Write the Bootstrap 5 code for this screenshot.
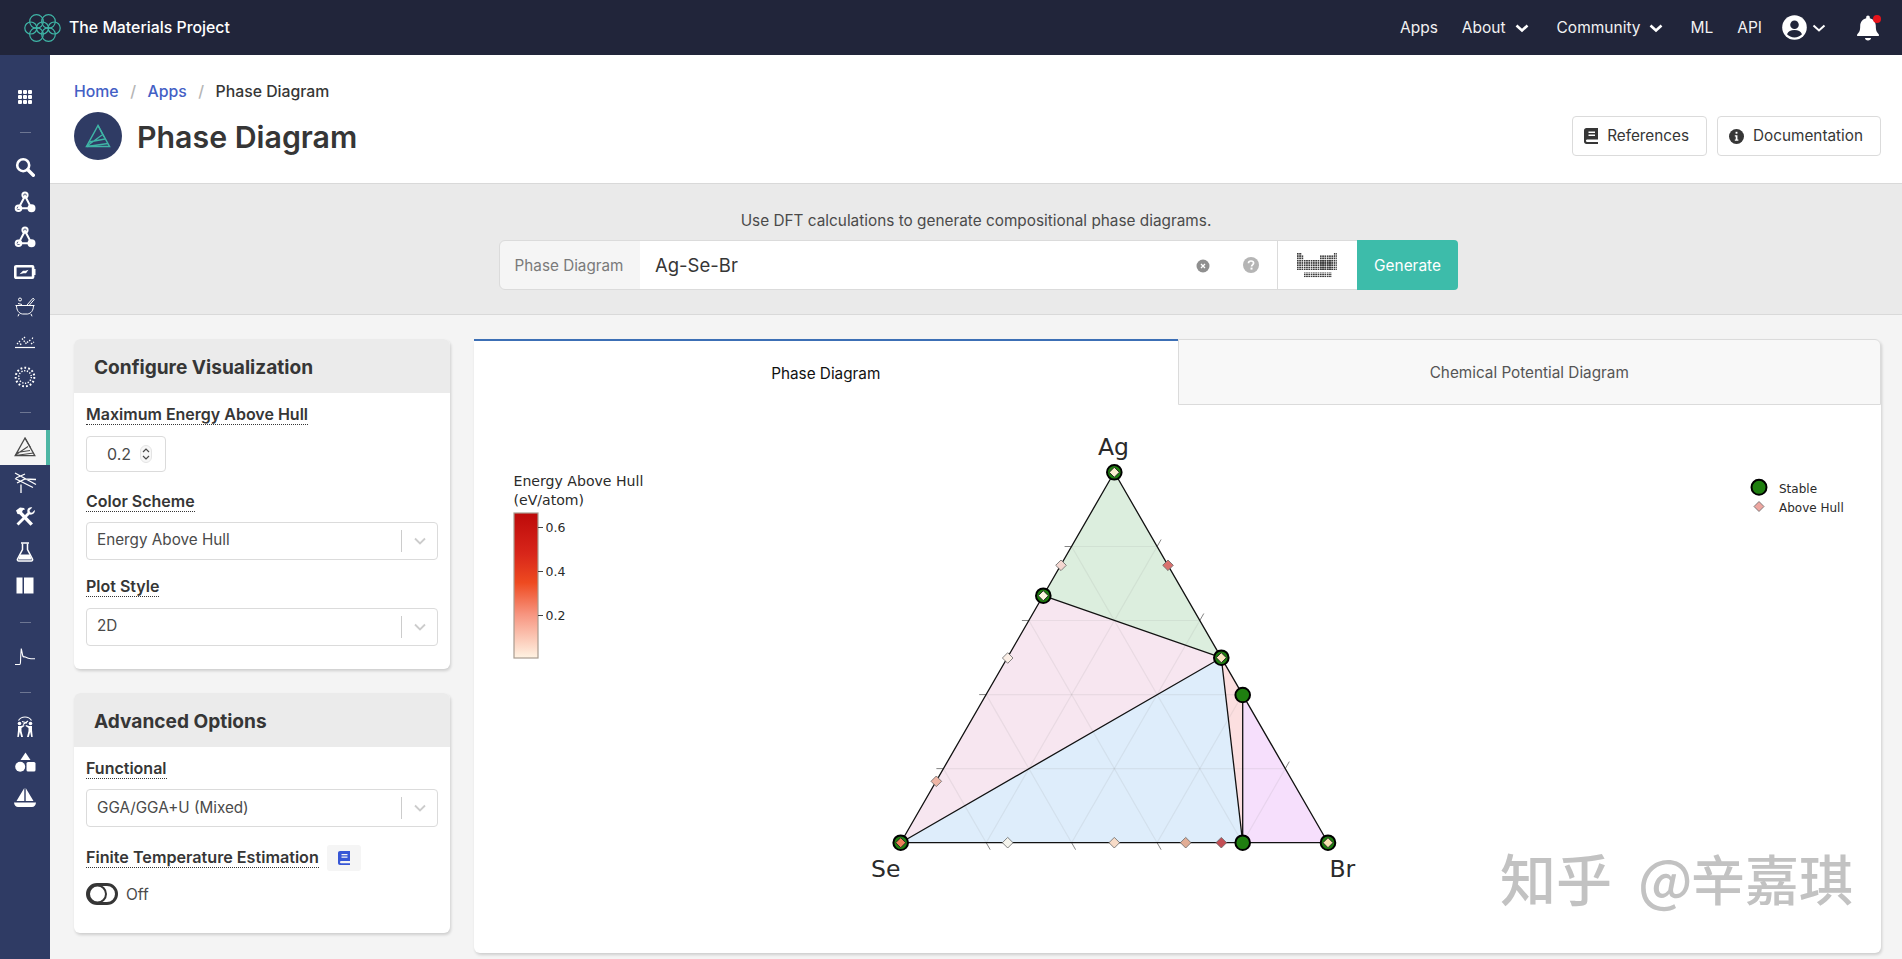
<!DOCTYPE html>
<html lang="en">
<head>
<meta charset="utf-8">
<title>Phase Diagram</title>
<link href="https://cdn.jsdelivr.net/npm/bootstrap@5.3.0/dist/css/bootstrap.min.css" rel="stylesheet">
<style>
html,body{height:959px;overflow:hidden}
body{font-family:Inter,"Liberation Sans",sans-serif;color:#363636;background:#f4f4f4;font-size:15.5px}
.mp-nav{height:55px;background:#21253a;color:#fff;padding:0 20px 0 24px;flex-wrap:nowrap}
.mp-brand{font-weight:500;font-size:15.85px;color:#fff;gap:8px}
.mp-links{gap:0;font-size:15.5px}
.mp-links .nav-link{color:#f2f2f2;padding:0;display:flex;align-items:center}
.mp-shell{height:904px}
.mp-side{width:50px;flex:none;background:#2f3b64;padding-top:24.5px;color:#fff}
.mp-sideitem{height:35px;display:flex;align-items:center;justify-content:center}
.mp-sideitem.is-active{background:#f5f5f5;border-right:4px solid #4db6a4;padding-left:4px;color:#444}
.mp-dash{width:11px;height:1px;background:rgba(255,255,255,.3)}
.mp-main{min-width:0}
.mp-head{background:#fff;border-bottom:1px solid #d9d9d9;height:129px;padding:25px 21px 0 24px}
.mp-head .breadcrumb{margin:0;font-size:15.8px;line-height:24px;--bs-breadcrumb-item-padding-x:11.5px;--bs-breadcrumb-divider-color:#b5b5b5;--bs-breadcrumb-item-active-color:#363636;font-weight:500}
.mp-head .breadcrumb a{color:#4460c5;text-decoration:none}
.mp-title{font-size:30.3px;font-weight:600;margin:0;line-height:48px;color:#363636;padding-top:2px}
.mp-round{width:48px;height:48px;border-radius:50%;background:#2f3b64;flex:none}
.mp-outbtn{height:40px;background:#fff;border:1px solid #dbdbdb;color:#363636;font-size:15.3px;padding:0 17px 0 11px;display:flex;align-items:center;gap:9px;border-radius:4px}
.mp-hero{height:131px;background:#eaeaea;border-bottom:1px solid #d9d9d9;padding-top:25px;text-align:center}
.mp-hero p{margin:0 0 7px;line-height:24px;font-size:15.35px;color:#4a4a4a}
.mp-search{width:959px;height:50px;margin:0 0 0 449px;flex-wrap:nowrap}
.mp-search .input-group-text{background:#f5f5f5;color:#7a7a7a;border-color:#dbdbdb;font-size:15.25px;width:142px;justify-content:center;padding:2px 2px 0 0}
.mp-field{position:relative;flex:1;background:#fff;border:1px solid #dbdbdb;border-left:0;display:flex;align-items:center;padding:2px 0 0 15px;font-size:18.5px;color:#363636}
.mp-pt{width:81px;background:#fff;border:1px solid #dbdbdb;border-left:0;display:flex;align-items:center;justify-content:center}
.mp-gen{width:101px;background:#3dbcaa;color:#fff;border:0;font-size:15.4px;border-radius:0 4px 4px 0;padding-top:8px}
.mp-body{padding:24px 21px 0 24px;gap:24px}
.mp-left{width:376px;flex:none}
.mp-card{border:0;border-radius:6px;box-shadow:1px 2px 3px rgba(10,10,10,.16);margin-bottom:24px}
.mp-card .card-header{background:#ebebeb;border:0;height:54px;padding:3px 20px 0;display:flex;align-items:center;font-size:19.1px;font-weight:700;color:#363636;border-radius:6px 6px 0 0}
.mp-card .card-body{padding:10px 12px 0 12px}
.mp-lbl{display:inline-block;font-weight:600;font-size:16px;line-height:20px;border-bottom:1px dotted #363636;color:#363636;margin:0}
.mp-lbl-long{font-size:16.15px}
.mp-num{width:80px;height:36px;margin-top:10px;border:1px solid #dbdbdb;border-radius:4px;display:flex;align-items:center;padding-left:20px;gap:9px;font-size:16px;color:#4a4a4a}
.mp-sel{height:38px;margin-top:9px;margin-bottom:15.6px;border:1px solid #dbdbdb;border-radius:4px;padding:0 0 0 10px;display:flex;align-items:center;font-size:15.25px;color:#4a4a4a;background:#fff}
.mp-sel span{flex:1}
.mp-sel i{width:1px;height:22px;background:#ccc;margin-right:11px}
.mp-sel svg{margin-right:10px}
.mp-sel-wide{margin-bottom:17.4px}
.mp-spacer{height:17.4px}
.mp-bookbtn{width:34px;height:26px;background:#f5f5f5;border-radius:3px;display:flex;align-items:center;justify-content:center}
.mp-off{font-size:15.5px;color:#4a4a4a}
.mp-bump{margin-bottom:4px}
.mp-panel{flex:1;min-width:0;height:614px;background:#fff;border-radius:6px;box-shadow:1px 2px 3px rgba(10,10,10,.16)}
.mp-tabs{border:0;flex-wrap:nowrap;height:66px}
.mp-tabs .nav-link{border-radius:0;height:66px;width:100%;display:flex;align-items:center;justify-content:center;font-size:15.3px;border:0}
.mp-tabs .nav-item:first-child .nav-link{color:#111;background:#fff;border-top:2px solid #3c6fb5;padding-top:11px}
.mp-tabs .nav-item:last-child .nav-link{color:#555;background:#f8f8f8;border:1px solid #dbdbdb;border-radius:0 6px 0 0;padding-bottom:6px}
.mp-plot{display:block;width:1407px;height:548px}
.mp-plot text{font-family:"DejaVu Sans","Liberation Sans",sans-serif;fill:#2a2a2a}
.mp-plot .wm{font-family:"Noto Sans CJK SC",sans-serif;fill:#c2c2c2;font-weight:500}
</style>
</head>
<body>
<nav class="navbar mp-nav">
  <a class="navbar-brand d-flex align-items-center p-0 m-0 mp-brand" href="#">
    <svg width="37" height="28" viewBox="0 0 37 28" fill="none" stroke="#3fb5a6" stroke-width="1.200"><circle cx="12.500" cy="7.500" r="6.800"/><circle cx="24.500" cy="7.500" r="6.800"/><circle cx="6.800" cy="14" r="6"/><circle cx="18.500" cy="14" r="6"/><circle cx="30.200" cy="14" r="6"/><circle cx="12.500" cy="20.500" r="6.800"/><circle cx="24.500" cy="20.500" r="6.800"/></svg>
    The Materials Project
  </a>
  <div class="nav mp-links align-items-center flex-nowrap">
    <a class="nav-link" href="#">Apps</a>
    <a class="nav-link" href="#" style="margin-left:24px">About<svg style="margin-left:8px" width="16" height="10" viewBox="0 0 16 10" fill="none" stroke="#fff" stroke-width="2.600"><path d="M2.500 2.500l5.500 5 5.500-5"/></svg></a>
    <a class="nav-link" href="#" style="margin-left:27px">Community<svg style="margin-left:8px" width="16" height="10" viewBox="0 0 16 10" fill="none" stroke="#fff" stroke-width="2.600"><path d="M2.500 2.500l5.500 5 5.500-5"/></svg></a>
    <a class="nav-link" href="#" style="margin-left:26px">ML</a>
    <a class="nav-link" href="#" style="margin-left:24px">API</a>
    <a class="nav-link" href="#" style="margin-left:20px"><svg width="25" height="25" viewBox="0 0 24 24"><circle cx="12" cy="12" r="11.800" fill="#fff"/><circle cx="12" cy="9.300" r="4.100" fill="#21253a"/><path d="M4.800 18.500c1.200-3 3.600-4 7.200-4s6 1 7.200 4c-1.800 2-4.400 3-7.200 3s-5.400-1-7.200-3z" fill="#21253a"/></svg><svg class="ms-1" width="16" height="10" viewBox="0 0 16 10" fill="none" stroke="#fff" stroke-width="2"><path d="M2.500 2.500l5.500 5 5.500-5"/></svg></a>
    <a class="nav-link" href="#" style="margin-left:29px"><svg width="26" height="27" viewBox="0 0 26 27"><path d="M12 1.500c1 0 1.800.8 1.800 1.800v.9c3.600.8 6 3.800 6 7.600 0 5 1 6.600 3 8.600.5.5.2 1.600-.8 1.600H2c-1 0-1.300-1.100-.8-1.600 2-2 3-3.600 3-8.600 0-3.800 2.400-6.800 6-7.600v-.9c0-1 .8-1.800 1.800-1.800zM9 24h6c0 1.500-1.300 2.500-3 2.500S9 25.500 9 24z" fill="#fff"/><circle cx="21" cy="5" r="4" fill="#e8141c"/></svg></a>
  </div>
</nav>
<div class="d-flex mp-shell">
  <aside class="mp-side">
    <div class="mp-sideitem"><svg width="16" height="16" fill="#fff"><rect x="1" y="1" width="4" height="4" rx="1"/><rect x="6" y="1" width="4" height="4" rx="1"/><rect x="11" y="1" width="4" height="4" rx="1"/><rect x="1" y="6" width="4" height="4" rx="1"/><rect x="6" y="6" width="4" height="4" rx="1"/><rect x="11" y="6" width="4" height="4" rx="1"/><rect x="1" y="11" width="4" height="4" rx="1"/><rect x="6" y="11" width="4" height="4" rx="1"/><rect x="11" y="11" width="4" height="4" rx="1"/></svg></div>
    <div class="mp-sideitem"><div class="mp-dash"></div></div>
    <div class="mp-sideitem"><svg width="20" height="20" viewBox="0 0 20 20" fill="none" stroke="#fff"><circle cx="8.200" cy="8.200" r="6" stroke-width="2.600"/><path d="M12.800 12.800l5.500 5.500" stroke-width="3.400" stroke-linecap="round"/></svg></div>
    <div class="mp-sideitem"><svg width="22" height="22" viewBox="0 0 22 22" fill="none" stroke="#fff" stroke-width="2"><path d="M11 5L4.500 17.300h13z"/><circle cx="11" cy="4" r="2.600"/><circle cx="4.500" cy="17.300" r="2.800"/><circle cx="17.500" cy="17.300" r="3" fill="#fff"/></svg></div>
    <div class="mp-sideitem"><svg width="22" height="22" viewBox="0 0 22 22" fill="none" stroke="#fff" stroke-width="2"><path d="M11 5L4.500 17.300h13z"/><circle cx="11" cy="4" r="2.600"/><circle cx="4.500" cy="17.300" r="2.800"/><circle cx="17.500" cy="17.300" r="3" fill="#fff"/></svg></div>
    <div class="mp-sideitem"><svg width="22" height="14" viewBox="0 0 22 14"><rect x="1.300" y="1.300" width="17.800" height="11.400" rx=".8" fill="none" stroke="#fff" stroke-width="2.600"/><rect x="19.500" y="4" width="2" height="6" fill="#fff"/><path d="M5.500 9.300l3.500-3.600h2.500L14.500 4.700 12 8.300H9.500z" fill="#fff"/></svg></div>
    <div class="mp-sideitem"><svg width="22" height="20" viewBox="0 0 22 20" fill="none" stroke="#fff" stroke-width="1"><path d="M1.500 8.500h19M2.500 8.500c0 5 2.500 8 6 8.500h5c3.500-.5 6-3.500 6-8.500M5 17l-1 2.300M17 17l1 2.300"/><circle cx="6" cy="2.500" r="1.500"/><path d="M13 8l6-6.800 1.300 1.200L15.500 8"/><path d="M4 6.500l4 1"/></svg></div>
    <div class="mp-sideitem"><svg width="22" height="14" viewBox="0 0 22 14" fill="none" stroke="#fff"><path d="M1 12.500h20" stroke-width="1.200"/><path d="M3 9l3-3M8 3.500l5 6M13 7.500l4-3M17 9l3-2M6 9.500l2-1M10 2l1 1M18 3l1 .5" stroke-width="1.400" stroke-dasharray="1.500 1.200"/></svg></div>
    <div class="mp-sideitem"><svg width="22" height="22" viewBox="0 0 22 22" fill="none" stroke="#fff"><circle cx="11" cy="11" r="9.300" stroke-width="2" stroke-dasharray="1.800 2.100"/><circle cx="11" cy="11" r="6.300" stroke-width="1.500" stroke-dasharray="1.300 1.500"/></svg></div>
    <div class="mp-sideitem"><div class="mp-dash"></div></div>
    <div class="mp-sideitem is-active"><svg width="22" height="20" viewBox="0 0 22 20" fill="none" stroke="#4a4a4a" stroke-width="1.100"><path d="M11 1L1.200 18.700h19.600z" stroke-width="1.300"/><path d="M11 1l5.500 9.500M1.500 18L14 9.500M3 15.500l13-2M1.500 18.500l18-2.500"/></svg></div>
    <div class="mp-sideitem"><svg width="24" height="24" viewBox="0 0 24 24" fill="none" stroke="#fff" stroke-width="1.300"><path d="M2 3l21 11.500M2 8.500l18 9M4 13l8-4 11 .5M8 14.500V23M3 8l9-4"/></svg></div>
    <div class="mp-sideitem"><svg width="22" height="22" viewBox="0 0 22 22" fill="#fff"><path d="M2 4.500L6 1.500l4 .5 1 1.500-2 .5-1 2 11 11.500-2.500 2.300L5.500 8.300 3.500 8z"/><path d="M20.800 4l-2.800 2.800-2-.5-.5-2L18.300 1.500c-2.500-.8-5 .8-5 3.500l.2 1.500L2.500 17.500l2 2L15.500 8.500c3 .8 6-1.500 5.300-4.500z"/></svg></div>
    <div class="mp-sideitem"><svg width="18" height="20" viewBox="0 0 18 20"><path d="M6.500 1.500v6L1.500 17c-.5 1 .2 2 1.300 2h12.400c1.100 0 1.800-1 1.300-2l-5-9.500v-6" fill="none" stroke="#fff" stroke-width="1.500"/><path d="M4.200 12.500h9.600l2 5H2.200z" fill="#fff"/><path d="M5 1h8" stroke="#fff" stroke-width="1.500"/></svg></div>
    <div class="mp-sideitem"><svg class="mp-bump" width="18" height="17" fill="#fff"><rect x="0.500" y="0.500" width="6" height="16"/><rect x="8" y="0.500" width="9.500" height="16"/></svg></div>
    <div class="mp-sideitem"><div class="mp-dash"></div></div>
    <div class="mp-sideitem"><svg width="22" height="20" viewBox="0 0 22 20" fill="none" stroke="#fff" stroke-width="1.100"><path d="M1 17.500h4.700c1 0 .7-1 1-8l.6-8 1.500 7.500c.5 1.500 1.500.5 2.500 1 2 1 3 1.500 5.700 1.800h4"/></svg></div>
    <div class="mp-sideitem"><div class="mp-dash"></div></div>
    <div class="mp-sideitem"><svg width="20" height="22" viewBox="0 0 20 22" fill="#fff"><circle cx="4.500" cy="7.500" r="1.800"/><circle cx="15.500" cy="7.500" r="1.800"/><path d="M3 10h3l3-1 .5 1-3 2v3l1.500 6H6.200L4.800 16 3.800 21H2.300L3 14zM17 10h-3l-3-1-.5 1 3 2v3l-1.500 6h1.800l1.400-5 1 5h1.500L17 14z"/><path d="M3.500 4.500C5 2 7.500 1 10 1s5 1 6.500 3.500M7 5.500l5 1.500M8 8.500l5-3.500" fill="none" stroke="#fff" stroke-width="1.200"/></svg></div>
    <div class="mp-sideitem"><svg width="22" height="21" viewBox="0 0 22 21" fill="#fff"><path d="M11.500 .5l5 7.500h-10z"/><circle cx="6.200" cy="14.800" r="5"/><rect x="12.500" y="10" width="9" height="9.500" rx="1.500"/></svg></div>
    <div class="mp-sideitem"><svg width="24" height="21" viewBox="0 0 24 21" fill="#fff"><path d="M11.300 1v13H3.500zM12.700 1l7.800 13h-7.800z"/><path d="M1 15.500h22c0 2.500-2 4.500-4 4.500H5c-2 0-4-2-4-4.500z"/></svg></div>
  </aside>
  <main class="flex-grow-1 mp-main">
    <header class="mp-head d-flex justify-content-between align-items-start">
      <div>
        <nav aria-label="breadcrumb"><ol class="breadcrumb"><li class="breadcrumb-item"><a href="#">Home</a></li><li class="breadcrumb-item"><a href="#">Apps</a></li><li class="breadcrumb-item active">Phase Diagram</li></ol></nav>
        <div class="d-flex align-items-center" style="gap:15px;margin-top:7px">
          <div class="mp-round d-flex align-items-center justify-content-center"><svg width="26" height="24" viewBox="0 0 26 24" fill="none" stroke="#3fb5a6" stroke-width="1.300"><path d="M13 1.500L1.500 22.500h23z" stroke-width="1.500"/><path d="M13 1.500l6 11.500M2 22L17 11M4 18l16-3M2 22.500l21-3"/></svg></div>
          <h1 class="mp-title">Phase Diagram</h1>
        </div>
      </div>
      <div class="d-flex" style="gap:10px;margin-top:36px">
        <a class="btn mp-outbtn" href="#"><svg width="14" height="16" viewBox="0 0 14 16"><path d="M2.500 0H14v11.500H3c-1.500 0-1.500 2.500 0 2.500h11v2H2.500C1 16 0 15 0 13.500v-11C0 1 1 0 2.500 0zM4.500 3.500V5h6.500V3.500zM4.500 6.500V8h6.500V6.500z" fill="#363636" fill-rule="evenodd"/></svg>References</a>
        <a class="btn mp-outbtn" href="#"><svg width="15" height="15" viewBox="0 0 16 16"><circle cx="8" cy="8" r="8" fill="#363636"/><rect x="7" y="3" width="2" height="2" fill="#fff"/><path d="M6.200 6.700H9v4.500h1v1.300H6.200v-1.300h1V8H6.200z" fill="#fff"/></svg>Documentation</a>
      </div>
    </header>
    <section class="mp-hero">
      <p>Use DFT calculations to generate compositional phase diagrams.</p>
      <div class="input-group mp-search">
        <span class="input-group-text">Phase Diagram</span>
        <div class="mp-field">Ag-Se-Br
          <svg class="position-absolute" style="left:556px;top:18px" width="14" height="14" viewBox="0 0 14 14"><circle cx="7" cy="7" r="6.500" fill="#8f8f8f"/><path d="M5 5l4 4M9 5l-4 4" stroke="#fff" stroke-width="1.300"/></svg>
          <svg class="position-absolute" style="left:603px;top:16px" width="16" height="16" viewBox="0 0 16 16"><circle cx="8" cy="8" r="8" fill="#b5b5b5"/><path d="M5.500 6.200C5.500 4.700 6.700 4 8 4s2.600.8 2.600 2.100c0 1.800-2 1.700-2 3.300" fill="none" stroke="#fff" stroke-width="1.700"/><rect x="7.500" y="10.600" width="2" height="2" fill="#fff"/></svg>
        </div>
        <div class="mp-pt"><svg width="41" height="25" viewBox="0 0 41 25"><defs><pattern id="mp-pg" width="2.300" height="2.300" patternUnits="userSpaceOnUse"><rect width="1.700" height="1.700" fill="#3a3a3a"/></pattern></defs><rect x="0" y="0" width="4.600" height="17" fill="url(#mp-pg)"/><rect x="4.600" y="2.300" width="2.300" height="14.700" fill="url(#mp-pg)"/><rect x="6.900" y="7" width="27.600" height="10" fill="url(#mp-pg)"/><rect x="23" y="2.300" width="14" height="14.700" fill="url(#mp-pg)"/><rect x="36.800" y="0" width="3" height="17" fill="url(#mp-pg)"/><rect x="7" y="19.500" width="27.600" height="4.600" fill="url(#mp-pg)"/></svg></div>
        <button class="btn mp-gen" type="button">Generate</button>
      </div>
    </section>
    <div class="d-flex mp-body">
      <div class="mp-left">
        <div class="card mp-card" style="height:330px">
          <div class="card-header">Configure Visualization</div>
          <div class="card-body">
            <label class="mp-lbl">Maximum Energy Above Hull</label>
            <div class="mp-num">0.2<svg width="12" height="18" viewBox="0 0 12 18" fill="none"><rect x=".5" y=".5" width="11" height="17" rx="5.500" fill="#f7f7f7" stroke="#e4e4e4"/><path d="M3 7l3-3 3 3M3 11l3 3 3-3" stroke="#4a4a4a" stroke-width="1.200"/></svg></div>
            <div class="mp-spacer"></div>
            <label class="mp-lbl">Color Scheme</label>
            <div class="mp-sel"><span>Energy Above Hull</span><i></i><svg width="14" height="10" viewBox="0 0 14 10" fill="none" stroke="#ccc" stroke-width="1.800"><path d="M2 2.500l5 5 5-5"/></svg></div>
            <label class="mp-lbl">Plot Style</label>
            <div class="mp-sel"><span>2D</span><i></i><svg width="14" height="10" viewBox="0 0 14 10" fill="none" stroke="#ccc" stroke-width="1.800"><path d="M2 2.500l5 5 5-5"/></svg></div>
          </div>
        </div>
        <div class="card mp-card" style="height:240px">
          <div class="card-header">Advanced Options</div>
          <div class="card-body">
            <label class="mp-lbl">Functional</label>
            <div class="mp-sel mp-sel-wide"><span>GGA/GGA+U (Mixed)</span><i></i><svg width="14" height="10" viewBox="0 0 14 10" fill="none" stroke="#ccc" stroke-width="1.800"><path d="M2 2.500l5 5 5-5"/></svg></div>
            <div class="d-flex align-items-center" style="gap:8px"><label class="mp-lbl mp-lbl-long">Finite Temperature Estimation</label><span class="mp-bookbtn"><svg width="12" height="14" viewBox="0 0 12 14"><path d="M2 0h10v10H3c-1.300 0-1.300 2.300 0 2.300h9V14H2c-1.200 0-2-1-2-2V2C0 .9.900 0 2 0zM3.500 3v1.200h6V3zM3.500 5.500v1.200h6V5.500z" fill="#3757d6" fill-rule="evenodd"/></svg></span></div>
            <div class="d-flex align-items-center" style="gap:8px;margin-top:12px">
              <svg width="32" height="22" viewBox="0 0 32 22" fill="none" stroke="#363636"><rect x="1.500" y="1.500" width="29" height="19" rx="9.500" stroke-width="3"/><circle cx="11.500" cy="11" r="8.500" fill="#fff" stroke-width="2"/></svg>
              <span class="mp-off">Off</span>
            </div>
          </div>
        </div>
      </div>
      <section class="mp-panel">
        <ul class="nav nav-tabs nav-justified mp-tabs">
          <li class="nav-item"><a class="nav-link active" href="#">Phase Diagram</a></li>
          <li class="nav-item"><a class="nav-link" href="#">Chemical Potential Diagram</a></li>
        </ul>
        <svg class="mp-plot" viewBox="474 405 1407 548">
          <defs><linearGradient id="mp-cb" x1="0" y1="0" x2="0" y2="1"><stop offset="0" stop-color="#bd0a0a"/><stop offset=".28" stop-color="#d8261a"/><stop offset=".48" stop-color="#ee4a20"/><stop offset=".7" stop-color="#f79580"/><stop offset="1" stop-color="#fff3e3"/></linearGradient></defs>
          <text x="513.500" y="485.500" font-size="14.100">Energy Above Hull</text>
          <text x="513.500" y="504.500" font-size="14.100">(eV/atom)</text>
          <rect x="514" y="513" width="24" height="145" fill="url(#mp-cb)" stroke="#a89c90" stroke-width="1.200"/>
          <path d="M538 527.500h5M538 571.500h5M538 615.500h5" stroke="#444"/>
          <text x="545.500" y="532" font-size="12.500">0.6</text><text x="545.500" y="576" font-size="12.500">0.4</text><text x="545.500" y="620" font-size="12.500">0.2</text>

          <polygon points="1114.300,472.300 1043.300,595.700 1221.300,657.700" fill="#dceede"/>
          <polygon points="900.700,842.700 1043.300,595.700 1221.300,657.700" fill="#f7e6f0"/>
          <polygon points="900.700,842.700 1221.300,657.700 1242.700,842.700" fill="#deedfb"/>
          <polygon points="1221.300,657.700 1242.700,695 1242.700,842.700" fill="#fcdfe0"/>
          <polygon points="1242.700,695 1328,842.700 1242.700,842.700" fill="#f6dffc"/>
          <g stroke="#888" stroke-opacity=".13" stroke-width="1.200" fill="none">
            <path d="M943.400 768.600H1285.300M986.200 694.600H1242.500M1028.900 620.500H1199.800M1071.600 546.500H1157.100"/>
            <path d="M943.400 768.600L986.200 842.700M986.200 694.600L1071.600 842.700M1028.900 620.500L1157.100 842.700M1071.600 546.500L1242.600 842.700"/>
            <path d="M986.200 842.700L1157.100 546.500M1071.600 842.700L1199.800 620.500M1157.100 842.700L1242.500 694.500M1242.600 842.700L1285.300 768.600"/>
          </g>
          <path d="M936.400 768.600h7M979.200 694.600h7M1021.900 620.500h7M1064.600 546.500h7M986.200 842.700l4 7M1071.600 842.700l4 7M1157.100 842.700l4 7M1157.100 546.500l4-7M1199.800 620.500l4-7M1285.300 768.600l4-7" stroke="#777" stroke-width=".9" fill="none"/>
          <g stroke="#111" stroke-width="1.300" fill="none">
            <path d="M1114.300 472.300L900.700 842.700H1328Z" stroke-linejoin="round"/>
            <path d="M1043.300 595.700L1221.300 657.700L900.700 842.700"/>
            <path d="M1221.300 657.700L1242.700 842.700V695"/>
          </g>
          <g fill="#1f7f10" stroke="#000" stroke-width="2">
            <circle cx="1114.300" cy="472.300" r="7.300"/><circle cx="1043.300" cy="595.700" r="7.300"/><circle cx="1221.300" cy="657.700" r="7.300"/><circle cx="1242.700" cy="695" r="7.300"/><circle cx="1242.700" cy="842.700" r="7.300"/><circle cx="900.700" cy="842.700" r="7.300"/><circle cx="1328" cy="842.700" r="7.300"/>
          </g>
          <g stroke="#222" stroke-width=".9">
            <path d="M1114.300 467.300l5 5-5 5-5-5z" fill="#fbeecf"/>
            <path d="M1043.300 590.700l5 5-5 5-5-5z" fill="#fdf5e0"/>
            <path d="M1221.300 652.700l5 5-5 5-5-5z" fill="#fae3c0"/>
            <path d="M900.700 837.700l5 5-5 5-5-5z" fill="#ee8058"/>
            <path d="M1328 837.700l5 5-5 5-5-5z" fill="#f8e0b0"/>
          </g>
          <g stroke="#666" stroke-width=".8">
            <path d="M1061 560l5.300 5.300-5.300 5.300-5.300-5.300z" fill="#f3d6d0"/>
            <path d="M1168 560l5.300 5.300-5.300 5.300-5.300-5.300z" fill="#d9706e"/>
            <path d="M1007.700 652.700l5.300 5.300-5.300 5.300-5.300-5.300z" fill="#fbeee6"/>
            <path d="M936.300 776l5.300 5.300-5.300 5.300-5.300-5.300z" fill="#eeb5a5"/>
            <path d="M1007.700 837.400l5.300 5.300-5.300 5.300-5.300-5.300z" fill="#f5f5ee"/>
            <path d="M1114.300 837.400l5.300 5.300-5.300 5.300-5.300-5.300z" fill="#f8dcc8"/>
            <path d="M1185.700 837.400l5.300 5.300-5.300 5.300-5.300-5.300z" fill="#e2ad95"/>
            <path d="M1221.300 837.400l5.300 5.300-5.300 5.300-5.300-5.300z" fill="#c44f55"/>
          </g>
          <text x="1098" y="455" font-size="23.500">Ag</text>
          <text x="871" y="877" font-size="23.500">Se</text>
          <text x="1329.500" y="877" font-size="23.500">Br</text>
          <circle cx="1759" cy="487.300" r="7.500" fill="#1f7f10" stroke="#000" stroke-width="2"/>
          <path d="M1759 501.500l5 5-5 5-5-5z" fill="#eda6a0" stroke="#666" stroke-width=".8"/>
          <text x="1779" y="493" font-size="12">Stable</text>
          <text x="1779" y="512" font-size="12">Above Hull</text>
          <text class="wm" y="901" font-size="56"><tspan x="1500">知乎</tspan><tspan x="1638">@</tspan><tspan x="1691" font-size="54">辛嘉琪</tspan></text>
        </svg>
      </section>
    </div>
  </main>
</div>
<script src="https://cdn.jsdelivr.net/npm/bootstrap@5.3.0/dist/js/bootstrap.bundle.min.js"></script>
</body>
</html>
